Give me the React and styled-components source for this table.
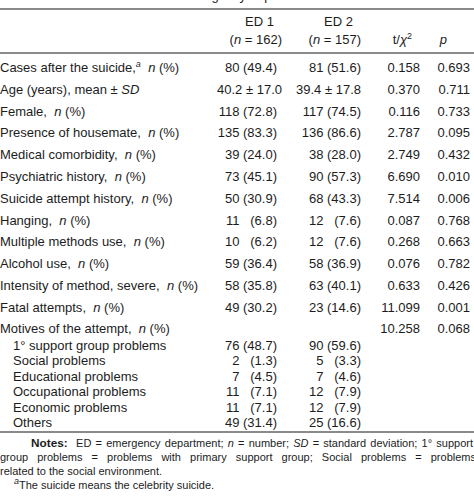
import React from "react";
import styled, { createGlobalStyle } from "styled-components";

const Global = createGlobalStyle`
  html, body { margin: 0; padding: 0; background: #fff; overflow: hidden; }
  body { font-family: "Liberation Sans", Arial, sans-serif; color: #1c1c1c; }
`;

const Page = styled.div`
  width: 474px;
  height: 501px;
  overflow: hidden;
  font-size: 13px;
`;

const Title = styled.div`
  height: 8px;
  overflow: hidden;
  display: flex;
  align-items: flex-end;
  padding-left: 150px;
  font-size: 13px;
  line-height: 13px;
  white-space: nowrap;
  & > span { display: block; margin-bottom: 6px; }
`;

const Rule = styled.div`
  height: 0;
  border-top: ${(p) => p.$w || 2}px solid #8a8a8a;
  width: 100%;
`;

const Grid = styled.div`
  display: grid;
  grid-template-columns: 200px 82px 79px 59px 50px;
  align-items: center;
`;

const HeadBlock = styled.div`
  padding-bottom: 6px;
`;

const HeadRow = styled(Grid)`
  height: ${(p) => p.$h}px;
  line-height: ${(p) => p.$h}px;
`;

const Row = styled(Grid)`
  height: ${(p) => p.$h || 21.8}px;
  line-height: ${(p) => p.$h || 21.8}px;
  white-space: nowrap;
`;

const Label = styled.div`
  padding-left: ${(p) => (p.$sub ? 13 : 0)}px;
`;

const Num = styled.div`
  text-align: right;
  padding-right: ${(p) => p.$pr || 0}px;
  white-space: pre;
`;

const Head = styled.div`
  text-align: right;
  padding-right: ${(p) => p.$pr || 0}px;
  white-space: pre;
`;

const I = styled.i`
  font-style: italic;
`;

const Sup = styled.sup`
  font-size: 9px;
  line-height: 0;
  vertical-align: 5px;
`;

const Body = styled.div`
  padding-top: 3px;
`;

const Notes = styled.div`
  font-size: 11px;
  line-height: 14px;
  padding-top: 3px;
`;

const NoteLine = styled.div`
  width: ${(p) => p.$w || 474}px;
  box-sizing: border-box;
  white-space: nowrap;
  text-align: ${(p) => (p.$justify ? "justify" : "left")};
  text-align-last: ${(p) => (p.$justify ? "justify" : "left")};
  padding-left: ${(p) => p.$indent || 0}px;
`;

const Bold = styled.b`
  font-weight: bold;
  font-size: 11.8px;
`;

const F = "\u2007";
const S = "\u00a0";

const N = () => (
  <>
    ,{S} <I>n</I> (%)
  </>
);

const rows = [
  [<>Cases after the suicide,<Sup><I>a</I></Sup>{S} <I>n</I> (%)</>, "80 (49.4)", "81 (51.6)", "0.158", "0.693"],
  [<>Age (years), mean ± <I>SD</I></>, "40.2 ± 17.0", "39.4 ± 17.8", "0.370", "0.711", true],
  [<>Female<N /></>, "118 (72.8)", "117 (74.5)", "0.116", "0.733"],
  [<>Presence of housemate<N /></>, "135 (83.3)", "136 (86.6)", "2.787", "0.095"],
  [<>Medical comorbidity<N /></>, "39 (24.0)", "38 (28.0)", "2.749", "0.432"],
  [<>Psychiatric history<N /></>, "73 (45.1)", "90 (57.3)", "6.690", "0.010"],
  [<>Suicide attempt history<N /></>, "50 (30.9)", "68 (43.3)", "7.514", "0.006"],
  [<>Hanging<N /></>, `11 ${F}(6.8)`, `12 ${F}(7.6)`, "0.087", "0.768"],
  [<>Multiple methods use<N /></>, `10 ${F}(6.2)`, `12 ${F}(7.6)`, "0.268", "0.663"],
  [<>Alcohol use<N /></>, "59 (36.4)", "58 (36.9)", "0.076", "0.782"],
  [<>Intensity of method, severe<N /></>, "58 (35.8)", "63 (40.1)", "0.633", "0.426"],
  [<>Fatal attempts<N /></>, "49 (30.2)", "23 (14.6)", "11.099", "0.001"],
];

const subs = [
  ["1° support group problems", "76 (48.7)", "90 (59.6)"],
  ["Social problems", `2 ${F}(1.3)`, `5 ${F}(3.3)`],
  ["Educational problems", `7 ${F}(4.5)`, `7 ${F}(4.6)`],
  ["Occupational problems", `11 ${F}(7.1)`, `12 ${F}(7.9)`],
  ["Economic problems", `11 ${F}(7.1)`, `12 ${F}(7.9)`],
  ["Others", "49 (31.4)", "25 (16.6)"],
];

export default function App() {
  return (
    <Page>
      <Global />
      <Title>
        <span>each emergency department</span>
      </Title>
      <Rule $w={2} />
      <HeadBlock>
        <HeadRow $h={24}>
          <div />
          <Head $pr={8}>ED 1</Head>
          <Head $pr={8}>ED 2</Head>
          <div />
          <div />
        </HeadRow>
        <HeadRow $h={12}>
          <div />
          <Head>
            (<I>n</I> = 162)
          </Head>
          <Head>
            (<I>n</I> = 157)
          </Head>
          <Head $pr={8}>
            t/<I>χ</I>
            <Sup>2</Sup>
          </Head>
          <Head $pr={23}>
            <I>p</I>
          </Head>
        </HeadRow>
      </HeadBlock>
      <Rule $w={2} />
      <Body>
        {rows.map((r, i) => (
          <Row key={i}>
            <Label>{r[0]}</Label>
            <Num $pr={r[5] ? 0 : 5}>{r[1]}</Num>
            <Num>{r[2]}</Num>
            <Num>{r[3]}</Num>
            <Num>{r[4]}</Num>
          </Row>
        ))}
        <Row $h={19}>
          <Label>
            Motives of the attempt,{S} <I>n</I> (%)
          </Label>
          <div />
          <div />
          <Num>10.258</Num>
          <Num>0.068</Num>
        </Row>
        {subs.map((s, i) => (
          <Row key={i} $h={15.5}>
            <Label $sub>{s[0]}</Label>
            <Num $pr={5}>{s[1]}</Num>
            <Num>{s[2]}</Num>
            <div />
            <div />
          </Row>
        ))}
      </Body>
      <Rule $w={2} />
      <Notes>
        <NoteLine $justify $indent={31} $w={473}>
          <Bold>Notes:</Bold>{S} ED = emergency department; <I>n</I> = number; <I>SD</I> = standard deviation; 1° support
        </NoteLine>
        <NoteLine $justify $w={476}>
          group problems = problems with primary support group; Social problems = problems
        </NoteLine>
        <NoteLine>related to the social environment.</NoteLine>
        <NoteLine $indent={14}>
          <Sup>
            <I>a</I>
          </Sup>
          The suicide means the celebrity suicide.
        </NoteLine>
      </Notes>
    </Page>
  );
}
